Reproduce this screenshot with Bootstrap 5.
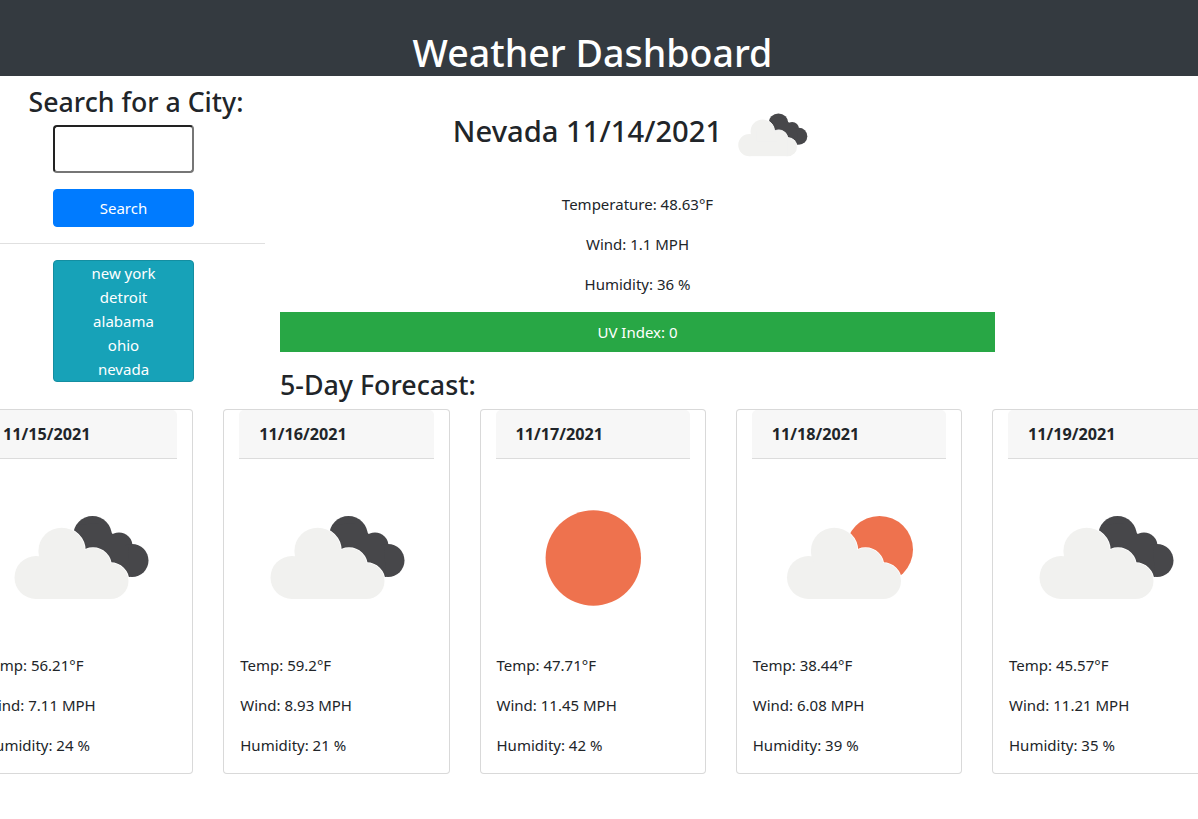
<!DOCTYPE html>
<html lang="en">
<head>
  <meta charset="UTF-8" />
  <meta name="viewport" content="width=device-width, initial-scale=1.0"/>
  <title>Weather Dashboard</title>
  <link href="https://cdn.jsdelivr.net/npm/bootstrap@5.3.0/dist/css/bootstrap.min.css" rel="stylesheet">
  <style>
    html, body { overflow-x: hidden; }
    body {
      background: #fff;
      color: #212529;
      font-family: "Noto Sans", "Open Sans", sans-serif;
      font-size: 15px;
      line-height: 24px;
    }

    h1, h2, h3 { font-weight: 500; line-height: 1.2; color: #212529; }

    .top-bar {
      background: #343a40;
      height: 76px;
      padding-top: 30px;
      padding-right: 13px;
    }
    .top-bar h1 { color: #fff; font-size: 37.6px; margin: 0; }

    .side-col { width: 265px; flex: none; padding-top: 9px; }
    .side-col h3 { font-size: 26.7px; margin: 0 0 6px; padding-left: 7px; line-height: 34px; }
    .side-box { width: 141px; margin-left: 53px; }
    .city-input {
      display: block;
      width: 141px;
      height: 48px;
      border: 2px solid;
      border-color: #222 #767676 #767676 #222;
      border-radius: 4px;
      margin-bottom: 16px;
      outline: 0;
    }
    .search-btn {
      display: block;
      width: 141px;
      height: 38px;
      background: #007bff;
      border-color: #007bff;
      border-radius: 4px;
      color: #fff;
      font-size: 15px;
    }
    .side-col hr { margin: 16px 0; border-color: #000; opacity: .12; }
    .city-list {
      width: 141px;
      background: #17a2b8;
      border: 1px solid #148ea1;
      border-radius: 4px;
      color: #fff;
      text-align: center;
    }

    .main-col { width: 715px; margin-left: 15px; padding-top: 8px; }
    .city-head { height: 100px; margin-bottom: 8px; }
    .city-head h2 { font-size: 29.2px; margin: 0 0 4px; }
    .main-col p { margin-bottom: 16px; }
    .uv-bar {
      background: #28a745;
      color: #fff;
      height: 40px;
      line-height: 40px;
      margin-bottom: 16px;
    }
    .main-col h3 { font-size: 26.8px; margin: 0 0 7px; line-height: 34px; }

    .forecast-row { margin-left: -33px; gap: 30px; width: 1300px; }
    .day-card {
      flex: none;
      width: 226.25px;
      padding: 0 15px 0;
      border-color: rgba(0,0,0,.15);
      border-radius: 4px;
    }
    .day-card .card-header {
      padding: 12px 20px;
      background: #f7f7f7;
      border-bottom: 1px solid #dcdcdc;
      font-size: 16.2px;
      font-weight: 700;
    }
    .day-card p { margin-bottom: 16px; padding-left: 1px; }
    .wx-big { display: block; width: 194px; height: 194px; }
    .wx-small { display: block; width: 100px; height: 100px; }
  </style>
</head>
<body>
  <!-- icon shapes, drawn on the 194 box of the forecast cards -->
  <svg width="0" height="0" class="position-absolute">
    <defs>
      <g id="cloud-shape">
        <circle cx="36" cy="86.5" r="21.5"/>
        <circle cx="61.7" cy="60" r="23.3"/>
        <circle cx="93" cy="75" r="18"/>
        <circle cx="110.5" cy="90" r="18"/>
        <rect x="36" y="72" width="74" height="36"/>
        <rect x="50" y="60" width="40" height="20"/>
      </g>
      <g id="dark-shape">
        <circle cx="92.5" cy="44.3" r="19.3"/>
        <circle cx="119" cy="55" r="13.5"/>
        <circle cx="132" cy="69.5" r="16.5"/>
        <polygon points="76,34 100,32 128,56 130,86 105,80"/>
      </g>
      <symbol id="wx-cloudy" viewBox="-17 -32 194 194">
        <use href="#dark-shape" fill="#47474a"/>
        <use href="#cloud-shape" fill="#fff" stroke="#fff" stroke-width="1.6"/>
        <use href="#cloud-shape" fill="#f1f1ef"/>
      </symbol>
      <symbol id="wx-clear" viewBox="-17 -32 194 194">
        <circle cx="80.3" cy="67" r="47.7" fill="#ee724e"/>
      </symbol>
      <symbol id="wx-partly" viewBox="-17 -32 194 194">
        <circle cx="110.5" cy="58.5" r="33.5" fill="#ee724e"/>
        <g transform="translate(3.5 0)">
          <use href="#cloud-shape" fill="#fff" stroke="#fff" stroke-width="1.6"/>
          <use href="#cloud-shape" fill="#f1f1ef"/>
        </g>
      </symbol>
    </defs>
  </svg>

  <header class="top-bar text-center">
    <h1>Weather Dashboard</h1>
  </header>

  <div class="d-flex">
    <aside class="side-col">
      <h3 class="text-center">Search for a City:</h3>
      <div class="side-box">
        <input type="text" class="city-input">
        <button class="btn search-btn">Search</button>
      </div>
      <hr>
      <div class="side-box city-list">
        <div>new york</div>
        <div>detroit</div>
        <div>alabama</div>
        <div>ohio</div>
        <div>nevada</div>
      </div>
    </aside>

    <main class="main-col">
      <div class="city-head d-flex justify-content-center align-items-center">
        <h2>Nevada 11/14/2021</h2>
        <svg class="wx-small"><use href="#wx-cloudy"/></svg>
      </div>
      <p class="text-center">Temperature: 48.63°F</p>
      <p class="text-center">Wind: 1.1 MPH</p>
      <p class="text-center">Humidity: 36 %</p>
      <div class="uv-bar text-center">UV Index: 0</div>
      <h3>5-Day Forecast:</h3>
    </main>
  </div>

  <div class="forecast-row d-flex">
    <div class="card day-card">
      <div class="card-header">11/15/2021</div>
      <svg class="wx-big"><use href="#wx-cloudy"/></svg>
      <p>Temp: 56.21°F</p>
      <p>Wind: 7.11 MPH</p>
      <p>Humidity: 24 %</p>
    </div>
    <div class="card day-card">
      <div class="card-header">11/16/2021</div>
      <svg class="wx-big"><use href="#wx-cloudy"/></svg>
      <p>Temp: 59.2°F</p>
      <p>Wind: 8.93 MPH</p>
      <p>Humidity: 21 %</p>
    </div>
    <div class="card day-card">
      <div class="card-header">11/17/2021</div>
      <svg class="wx-big"><use href="#wx-clear"/></svg>
      <p>Temp: 47.71°F</p>
      <p>Wind: 11.45 MPH</p>
      <p>Humidity: 42 %</p>
    </div>
    <div class="card day-card">
      <div class="card-header">11/18/2021</div>
      <svg class="wx-big"><use href="#wx-partly"/></svg>
      <p>Temp: 38.44°F</p>
      <p>Wind: 6.08 MPH</p>
      <p>Humidity: 39 %</p>
    </div>
    <div class="card day-card">
      <div class="card-header">11/19/2021</div>
      <svg class="wx-big"><use href="#wx-cloudy"/></svg>
      <p>Temp: 45.57°F</p>
      <p>Wind: 11.21 MPH</p>
      <p>Humidity: 35 %</p>
    </div>
  </div>

  <script src="https://cdn.jsdelivr.net/npm/bootstrap@5.3.0/dist/js/bootstrap.bundle.min.js"></script>
</body>
</html>
